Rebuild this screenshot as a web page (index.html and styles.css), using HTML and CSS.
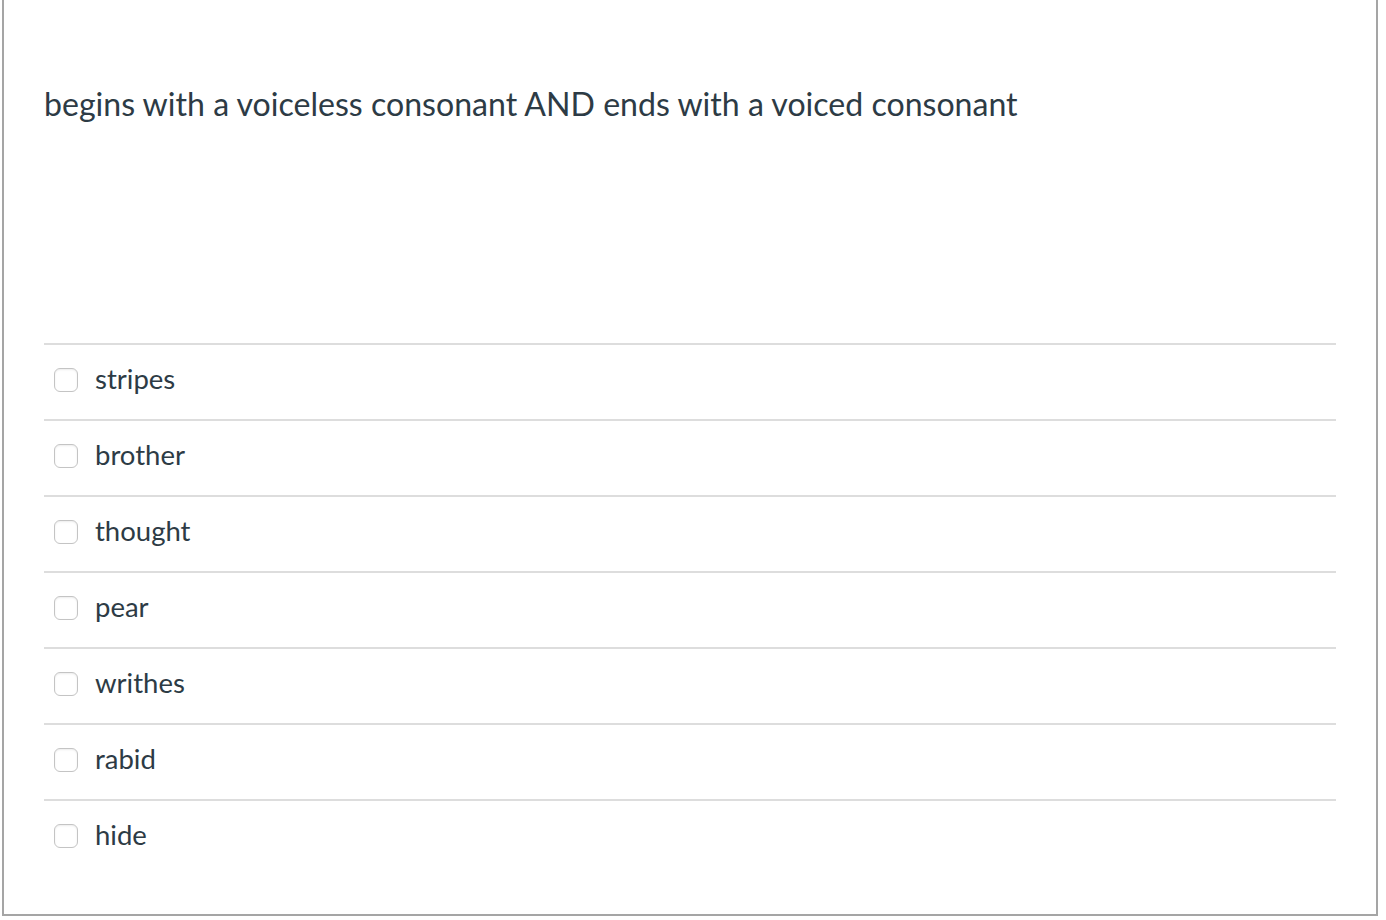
FILE: index.html
```html
<!DOCTYPE html>
<html>
<head>
<meta charset="utf-8">
<link rel="stylesheet" href="styles.css">
</head>
<body>
<div class="frame">
  <div class="question">begins with a voiceless consonant AND ends with a voiced consonant</div>
  <div class="answers">
    <label class="answer"><span class="box"></span><span class="label">stripes</span></label>
    <label class="answer"><span class="box"></span><span class="label">brother</span></label>
    <label class="answer"><span class="box"></span><span class="label">thought</span></label>
    <label class="answer"><span class="box"></span><span class="label">pear</span></label>
    <label class="answer"><span class="box"></span><span class="label">writhes</span></label>
    <label class="answer"><span class="box"></span><span class="label">rabid</span></label>
    <label class="answer"><span class="box"></span><span class="label">hide</span></label>
  </div>
</div>
</body>
</html>
```
FILE: styles.css
```css
html, body {
  margin: 0;
  padding: 0;
  background: #fff;
}
body {
  font-family: Lato, "Liberation Sans", sans-serif;
  color: #2d3b45;
}
.frame {
  margin-left: 2px;
  width: 1376px;
  height: 916px;
  box-sizing: border-box;
  border: 2px solid #a5a5a5;
  border-top: none;
  padding: 0 40px 0 40px;
}
.question {
  font-size: 32.1px;
  line-height: 40px;
  padding-top: 84px;
  height: 343px;
  box-sizing: border-box;
}
.answers {
  display: flex;
  flex-direction: column;
}
.answer {
  display: flex;
  align-items: center;
  height: 76px;
  box-sizing: border-box;
  border-top: 2px solid #dddddd;
  padding-left: 10px;
  padding-bottom: 4px;
  gap: 17px;
}
.box {
  width: 24px;
  height: 24px;
  box-sizing: border-box;
  border: 1px solid #c4c4c4;
  border-radius: 6px;
  background: #fff;
  box-shadow: inset 0 1px 2px rgba(0,0,0,0.08);
}
.label {
  font-size: 27.5px;
  line-height: 30px;
  margin-bottom: 2px;
}
```
